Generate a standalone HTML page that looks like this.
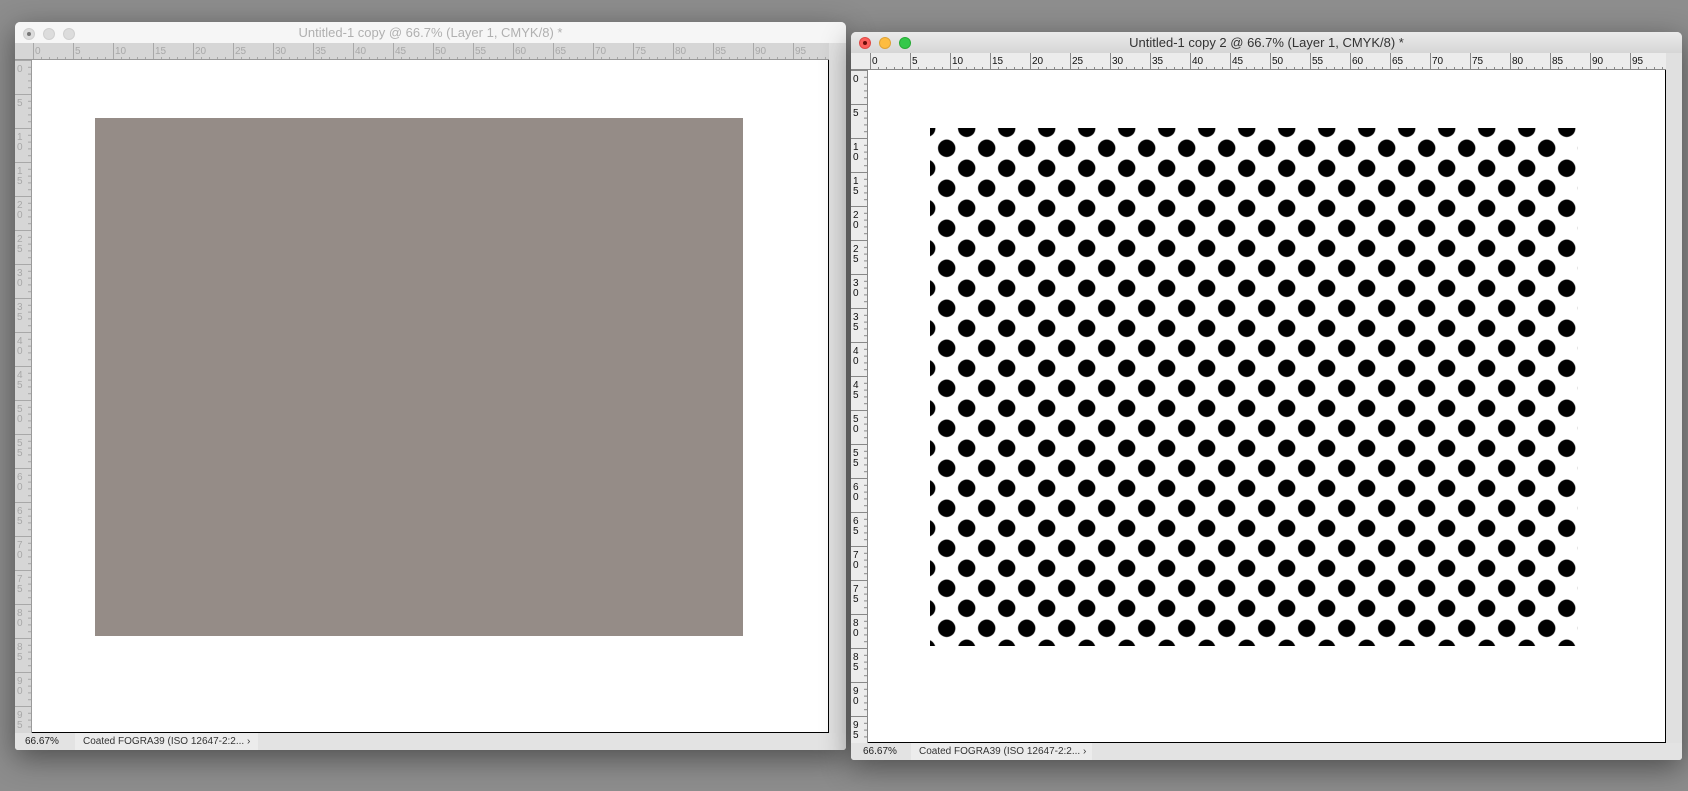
<!DOCTYPE html>
<html><head><meta charset="utf-8"><style>
*{margin:0;padding:0;box-sizing:border-box}
body{width:1688px;height:791px;overflow:hidden;background:#8d8d8d;font-family:"Liberation Sans",sans-serif;position:relative}
.win{position:absolute;border-radius:5px 5px 3px 3px;overflow:hidden;box-shadow:0 8px 30px rgba(0,0,0,.45)}
.abs{position:absolute}
.title{position:absolute;left:0;right:0;top:0;font-size:13px;text-align:center}
.dot{position:absolute;width:12px;height:12px;border-radius:50%}
.status{position:absolute;left:0;right:0;background:#e3e3e3;font-size:10px;color:#222;white-space:nowrap}
svg text{font-family:"Liberation Sans",sans-serif;font-size:10px}
</style></head><body>

<!-- LEFT WINDOW -->
<div class="win" style="left:15px;top:22px;width:831px;height:728px;background:#ececec">
  <div class="abs" style="left:0;top:0;width:831px;height:21px;background:#f6f6f6"></div>
  <div class="title" style="top:3px;color:#b0b0b0">Untitled-1 copy @ 66.7% (Layer 1, CMYK/8) *</div>
  <div class="dot" style="left:8px;top:6px;background:#dcdcdc;border:1px solid #cfcfcf"><div style="width:4px;height:4px;border-radius:50%;background:#777;margin:3px"></div></div>
  <div class="dot" style="left:28px;top:6px;background:#dcdcdc;border:1px solid #cfcfcf"></div>
  <div class="dot" style="left:48px;top:6px;background:#dcdcdc;border:1px solid #cfcfcf"></div>
  <svg class="abs" style="left:0;top:21px" width="831" height="690">
    <defs>
      <pattern id="hl" x="18" y="0" width="40" height="17" patternUnits="userSpaceOnUse">
        <rect x="0" y="0" width="1" height="17" fill="#a8a8a8"/>
        <rect x="8" y="14" width="1" height="3" fill="#a8a8a8"/><rect x="16" y="14" width="1" height="3" fill="#a8a8a8"/>
        <rect x="24" y="14" width="1" height="3" fill="#a8a8a8"/><rect x="32" y="14" width="1" height="3" fill="#a8a8a8"/>
      </pattern>
      <pattern id="vl" x="0" y="17" width="17" height="34" patternUnits="userSpaceOnUse">
        <rect x="0" y="0" width="17" height="1" fill="#a8a8a8"/>
        <rect x="13" y="6.8" width="4" height="1" fill="#a8a8a8"/><rect x="13" y="13.6" width="4" height="1" fill="#a8a8a8"/>
        <rect x="13" y="20.4" width="4" height="1" fill="#a8a8a8"/><rect x="13" y="27.2" width="4" height="1" fill="#a8a8a8"/>
      </pattern>
    </defs>
    <rect x="0" y="0" width="831" height="17" fill="#d6d6d6"/>
    <rect x="17" y="0" width="797" height="17" fill="url(#hl)"/>
    <rect x="0" y="16" width="814" height="1" fill="#9a9a9a"/>
    <rect x="0" y="17" width="17" height="673" fill="#d6d6d6"/>
    <rect x="0" y="17" width="17" height="673" fill="url(#vl)"/>
    <rect x="16" y="17" width="1" height="673" fill="#9a9a9a"/>
    <g fill="#a8a8a8">
      <text x="20" y="11">0</text><text x="60" y="11">5</text><text x="100" y="11">10</text><text x="140" y="11">15</text><text x="180" y="11">20</text><text x="220" y="11">25</text><text x="260" y="11">30</text><text x="300" y="11">35</text><text x="340" y="11">40</text><text x="380" y="11">45</text><text x="420" y="11">50</text><text x="460" y="11">55</text><text x="500" y="11">60</text><text x="540" y="11">65</text><text x="580" y="11">70</text><text x="620" y="11">75</text><text x="660" y="11">80</text><text x="700" y="11">85</text><text x="740" y="11">90</text><text x="780" y="11">95</text>
      <text x="2" y="29">0</text><text x="2" y="63">5</text>
      <text x="2" y="97">1</text><text x="2" y="107">0</text><text x="2" y="131">1</text><text x="2" y="141">5</text>
      <text x="2" y="165">2</text><text x="2" y="175">0</text><text x="2" y="199">2</text><text x="2" y="209">5</text>
      <text x="2" y="233">3</text><text x="2" y="243">0</text><text x="2" y="267">3</text><text x="2" y="277">5</text>
      <text x="2" y="301">4</text><text x="2" y="311">0</text><text x="2" y="335">4</text><text x="2" y="345">5</text>
      <text x="2" y="369">5</text><text x="2" y="379">0</text><text x="2" y="403">5</text><text x="2" y="413">5</text>
      <text x="2" y="437">6</text><text x="2" y="447">0</text><text x="2" y="471">6</text><text x="2" y="481">5</text>
      <text x="2" y="505">7</text><text x="2" y="515">0</text><text x="2" y="539">7</text><text x="2" y="549">5</text>
      <text x="2" y="573">8</text><text x="2" y="583">0</text><text x="2" y="607">8</text><text x="2" y="617">5</text>
      <text x="2" y="641">9</text><text x="2" y="651">0</text><text x="2" y="675">9</text><text x="2" y="685">5</text>
    </g>
    <rect x="814" y="0" width="17" height="690" fill="#e2e2e2"/>
  </svg>
  <div class="abs" style="left:17px;top:38px;width:797px;height:673px;background:#fff;border-right:1px solid #000;border-bottom:1px solid #000"></div>
  <div class="abs" style="left:80px;top:96px;width:648px;height:518px;background:#958c87"></div>
  <div class="status" style="top:711px;height:17px">
    <span class="abs" style="left:10px;top:3px">66.67%</span>
    <span class="abs" style="left:60px;top:0;height:17px;width:183px;background:#ececec;padding:3px 0 0 8px;color:#333">Coated FOGRA39 (ISO 12647-2:2... &#x203A;</span>
  </div>
</div>

<!-- RIGHT WINDOW -->
<div class="win" style="left:851px;top:32px;width:831px;height:728px;background:#ececec">
  <div class="abs" style="left:0;top:0;width:831px;height:21px;background:linear-gradient(#ebebeb,#d6d6d6)"></div>
  <div class="title" style="top:3px;color:#333">Untitled-1 copy 2 @ 66.7% (Layer 1, CMYK/8) *</div>
  <div class="dot" style="left:8px;top:5px;background:#fc605c;border:1px solid #de4a46"><div style="width:4px;height:4px;border-radius:50%;background:#6b0d0a;margin:3px"></div></div>
  <div class="dot" style="left:28px;top:5px;background:#fdbc40;border:1px solid #dea236"></div>
  <div class="dot" style="left:48px;top:5px;background:#34c84a;border:1px solid #27aa35"></div>
  <svg class="abs" style="left:0;top:21px" width="831" height="690">
    <defs>
      <pattern id="hr" x="19" y="0" width="40" height="17" patternUnits="userSpaceOnUse">
        <rect x="0" y="0" width="1" height="17" fill="#888"/>
        <rect x="8" y="14" width="1" height="3" fill="#888"/><rect x="16" y="14" width="1" height="3" fill="#888"/>
        <rect x="24" y="14" width="1" height="3" fill="#888"/><rect x="32" y="14" width="1" height="3" fill="#888"/>
      </pattern>
      <pattern id="vr" x="0" y="17" width="17" height="34" patternUnits="userSpaceOnUse">
        <rect x="0" y="0" width="17" height="1" fill="#888"/>
        <rect x="13" y="6.8" width="4" height="1" fill="#888"/><rect x="13" y="13.6" width="4" height="1" fill="#888"/>
        <rect x="13" y="20.4" width="4" height="1" fill="#888"/><rect x="13" y="27.2" width="4" height="1" fill="#888"/>
      </pattern>
    </defs>
    <rect x="0" y="0" width="831" height="17" fill="#ececec"/>
    <rect x="17" y="0" width="798" height="17" fill="url(#hr)"/>
    <rect x="0" y="16" width="815" height="1" fill="#888"/>
    <rect x="0" y="17" width="17" height="673" fill="#ececec"/>
    <rect x="0" y="17" width="17" height="673" fill="url(#vr)"/>
    <rect x="16" y="17" width="1" height="673" fill="#888"/>
    <g fill="#111">
      <text x="21" y="11">0</text><text x="61" y="11">5</text><text x="101" y="11">10</text><text x="141" y="11">15</text><text x="181" y="11">20</text><text x="221" y="11">25</text><text x="261" y="11">30</text><text x="301" y="11">35</text><text x="341" y="11">40</text><text x="381" y="11">45</text><text x="421" y="11">50</text><text x="461" y="11">55</text><text x="501" y="11">60</text><text x="541" y="11">65</text><text x="581" y="11">70</text><text x="621" y="11">75</text><text x="661" y="11">80</text><text x="701" y="11">85</text><text x="741" y="11">90</text><text x="781" y="11">95</text>
      <text x="2" y="29">0</text><text x="2" y="63">5</text>
      <text x="2" y="97">1</text><text x="2" y="107">0</text><text x="2" y="131">1</text><text x="2" y="141">5</text>
      <text x="2" y="165">2</text><text x="2" y="175">0</text><text x="2" y="199">2</text><text x="2" y="209">5</text>
      <text x="2" y="233">3</text><text x="2" y="243">0</text><text x="2" y="267">3</text><text x="2" y="277">5</text>
      <text x="2" y="301">4</text><text x="2" y="311">0</text><text x="2" y="335">4</text><text x="2" y="345">5</text>
      <text x="2" y="369">5</text><text x="2" y="379">0</text><text x="2" y="403">5</text><text x="2" y="413">5</text>
      <text x="2" y="437">6</text><text x="2" y="447">0</text><text x="2" y="471">6</text><text x="2" y="481">5</text>
      <text x="2" y="505">7</text><text x="2" y="515">0</text><text x="2" y="539">7</text><text x="2" y="549">5</text>
      <text x="2" y="573">8</text><text x="2" y="583">0</text><text x="2" y="607">8</text><text x="2" y="617">5</text>
      <text x="2" y="641">9</text><text x="2" y="651">0</text><text x="2" y="675">9</text><text x="2" y="685">5</text>
    </g>
    <rect x="815" y="0" width="16" height="690" fill="#e0e0e0"/>
  </svg>
  <div class="abs" style="left:17px;top:38px;width:798px;height:673px;background:#fff;border-right:1px solid #000;border-bottom:1px solid #000"></div>
  <svg class="abs" style="left:79px;top:96px" width="648" height="518">
    <defs>
      <pattern id="dots" x="-3.3" y="0.3" width="40" height="40" patternUnits="userSpaceOnUse">
        <circle cx="0" cy="0" r="8.7" fill="#000"/><circle cx="40" cy="0" r="8.7" fill="#000"/>
        <circle cx="0" cy="40" r="8.7" fill="#000"/><circle cx="40" cy="40" r="8.7" fill="#000"/>
        <circle cx="20" cy="20" r="8.7" fill="#000"/>
      </pattern>
    </defs>
    <rect width="648" height="518" fill="url(#dots)"/>
  </svg>
  <div class="status" style="top:711px;height:17px">
    <span class="abs" style="left:12px;top:3px">66.67%</span>
    <span class="abs" style="left:60px;top:0;height:17px;width:181px;background:#ececec;padding:3px 0 0 8px;color:#333">Coated FOGRA39 (ISO 12647-2:2... &#x203A;</span>
  </div>
</div>
</body></html>
